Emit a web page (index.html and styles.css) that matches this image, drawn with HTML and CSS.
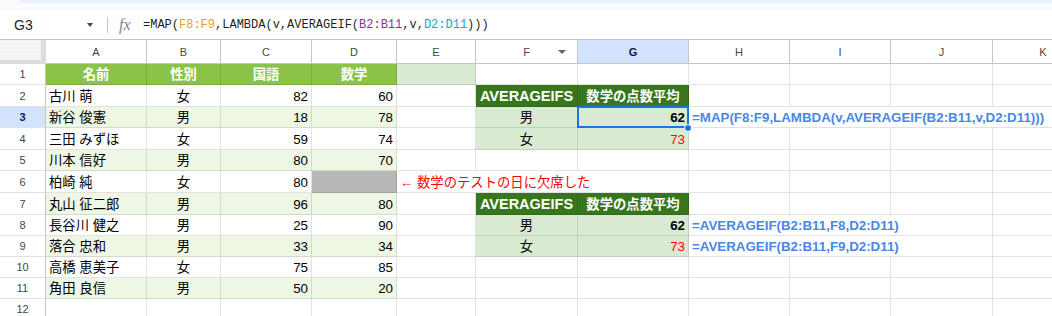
FILE: index.html
```html
<!DOCTYPE html>
<html lang="ja">
  <head>
    <meta charset="UTF-8" />
    <meta name="viewport" content="width=device-width, initial-scale=1.0" />
    <title>AVERAGEIF - Sheet</title>
    <link rel="stylesheet" href="styles.css">
  </head>
  <body>
    <div class="topstrip"><div class="toolbarEdge"></div></div>

    <div class="formulaBar">
      <div class="nameBox">
        <span>G3</span>
        <span class="caret"></span>
      </div>
      <div class="divider"></div>
      <span class="fx">fx</span>
      <div class="formula">=MAP(<span class="r1">F8:F9</span>,LAMBDA(v,AVERAGEIF(<span class="r2">B2:B11</span>,v,<span class="r3">D2:D11</span>)))</div>
    </div>

    <div class="sheet">
      <!-- column headers -->
      <div class="corner"></div>
      <div class="ch">A</div>
      <div class="ch">B</div>
      <div class="ch">C</div>
      <div class="ch">D</div>
      <div class="ch">E</div>
      <div class="ch">F<span class="filter"></span></div>
      <div class="ch on">G</div>
      <div class="ch">H</div>
      <div class="ch">I</div>
      <div class="ch">J</div>
      <div class="ch">K</div>

      <!-- row 1 -->
      <div class="rh">1</div>
      <div class="c head">名前</div>
      <div class="c head">性別</div>
      <div class="c head">国語</div>
      <div class="c head">数学</div>
      <div class="c pale"></div>
      <div class="c"></div><div class="c"></div><div class="c"></div>
      <div class="c"></div><div class="c"></div><div class="c"></div>

      <!-- row 2 -->
      <div class="rh">2</div>
      <div class="c">古川 萌</div>
      <div class="c mid">女</div>
      <div class="c num">82</div>
      <div class="c num">60</div>
      <div class="c"></div>
      <div class="c dark latin">AVERAGEIFS</div>
      <div class="c dark">数学の点数平均</div>
      <div class="c"></div><div class="c"></div><div class="c"></div><div class="c"></div>

      <!-- row 3 -->
      <div class="rh on">3</div>
      <div class="c band">新谷 俊憲</div>
      <div class="c band mid">男</div>
      <div class="c band num">18</div>
      <div class="c band num">78</div>
      <div class="c"></div>
      <div class="c pale mid">男</div>
      <div class="c pale num bold active">62<span class="handle"></span></div>
      <div class="c blue span4">=MAP(F8:F9,LAMBDA(v,AVERAGEIF(B2:B11,v,D2:D11)))</div>

      <!-- row 4 -->
      <div class="rh">4</div>
      <div class="c">三田 みずほ</div>
      <div class="c mid">女</div>
      <div class="c num">59</div>
      <div class="c num">74</div>
      <div class="c"></div>
      <div class="c pale mid">女</div>
      <div class="c pale num red">73</div>
      <div class="c"></div><div class="c"></div><div class="c"></div><div class="c"></div>

      <!-- row 5 -->
      <div class="rh">5</div>
      <div class="c band">川本 信好</div>
      <div class="c band mid">男</div>
      <div class="c band num">80</div>
      <div class="c band num">70</div>
      <div class="c"></div><div class="c"></div><div class="c"></div>
      <div class="c"></div><div class="c"></div><div class="c"></div><div class="c"></div>

      <!-- row 6 -->
      <div class="rh">6</div>
      <div class="c">柏崎 純</div>
      <div class="c mid">女</div>
      <div class="c num">80</div>
      <div class="c blank"></div>
      <div class="c red span3">← 数学のテストの日に欠席した</div>
      <div class="c"></div><div class="c"></div><div class="c"></div><div class="c"></div>

      <!-- row 7 -->
      <div class="rh">7</div>
      <div class="c band">丸山 征二郎</div>
      <div class="c band mid">男</div>
      <div class="c band num">96</div>
      <div class="c band num">80</div>
      <div class="c"></div>
      <div class="c dark latin">AVERAGEIFS</div>
      <div class="c dark">数学の点数平均</div>
      <div class="c"></div><div class="c"></div><div class="c"></div><div class="c"></div>

      <!-- row 8 -->
      <div class="rh">8</div>
      <div class="c">長谷川 健之</div>
      <div class="c mid">男</div>
      <div class="c num">25</div>
      <div class="c num">90</div>
      <div class="c"></div>
      <div class="c pale mid">男</div>
      <div class="c pale num bold">62</div>
      <div class="c blue span3">=AVERAGEIF(B2:B11,F8,D2:D11)</div>
      <div class="c"></div>

      <!-- row 9 -->
      <div class="rh">9</div>
      <div class="c band">落合 忠和</div>
      <div class="c band mid">男</div>
      <div class="c band num">33</div>
      <div class="c band num">34</div>
      <div class="c"></div>
      <div class="c pale mid">女</div>
      <div class="c pale num red">73</div>
      <div class="c blue span3">=AVERAGEIF(B2:B11,F9,D2:D11)</div>
      <div class="c"></div>

      <!-- row 10 -->
      <div class="rh">10</div>
      <div class="c">高橋 恵美子</div>
      <div class="c mid">女</div>
      <div class="c num">75</div>
      <div class="c num">85</div>
      <div class="c"></div><div class="c"></div><div class="c"></div>
      <div class="c"></div><div class="c"></div><div class="c"></div><div class="c"></div>

      <!-- row 11 -->
      <div class="rh">11</div>
      <div class="c band">角田 良信</div>
      <div class="c band mid">男</div>
      <div class="c band num">50</div>
      <div class="c band num">20</div>
      <div class="c"></div><div class="c"></div><div class="c"></div>
      <div class="c"></div><div class="c"></div><div class="c"></div><div class="c"></div>

      <!-- row 12 -->
      <div class="rh">12</div>
      <div class="c"></div><div class="c"></div><div class="c"></div><div class="c"></div>
      <div class="c"></div><div class="c"></div><div class="c"></div><div class="c"></div>
      <div class="c"></div><div class="c"></div><div class="c"></div>
    </div>
  </body>
</html>
```

FILE: styles.css
```css
body {
  margin: 0;
  width: 1052px;
  height: 316px;
  overflow: hidden;
  background: #fff;
  font-family: "Liberation Sans", "Noto Sans CJK JP", sans-serif;
  color: #000;
}

.topstrip {
  height: 10px;
  background: #f9fbfd;
}
.toolbarEdge {
  height: 3px;
  margin-left: 18px;
  background: #edf2fa;
  border-bottom-left-radius: 3px;
}

.formulaBar {
  height: 29px;
  display: flex;
  align-items: center;
}
.nameBox {
  width: 107px;
  box-sizing: border-box;
  padding: 0 14px 0 14px;
  display: flex;
  align-items: center;
  justify-content: space-between;
  font-size: 14px;
  color: #1f1f1f;
}
.caret {
  width: 0;
  height: 0;
  border-left: 3.5px solid transparent;
  border-right: 3.5px solid transparent;
  border-top: 4px solid #444746;
}
.divider {
  width: 1px;
  height: 16px;
  background: #c4c7c5;
}
.fx {
  width: 15px;
  margin-left: 11px;
  font-family: "Liberation Serif", serif;
  font-style: italic;
  font-size: 16px;
  color: #80868b;
}
.formula {
  margin-left: 9px;
  font-family: "Liberation Mono", monospace;
  font-size: 12px;
  color: #1f1f1f;
}
.r1 { color: #f7981d; }
.r2 { color: #7e3794; }
.r3 { color: #11a9cc; }

.sheet {
  display: grid;
  grid-template-columns: 46px 101px 74px 91px 85px 79px 102px 111px 101px 101px 102px 101px;
  grid-template-rows: 24px 21px 22px 21px 22px 21px 22px 22px 21px 21px 21px 21px 21px;
  width: max-content;
  border-top: 1px solid #c4c7c5;
}

.corner {
  background-color: #f1f3f4;
  background-image: radial-gradient(#fff 0.6px, transparent 0.8px);
  background-size: 4px 4px;
  border-right: 5px solid #dadce0;
  border-bottom: 4px solid #dadce0;
}
.ch {
  position: relative;
  display: flex;
  align-items: center;
  justify-content: center;
  font-size: 11px;
  color: #444746;
  border-right: 1px solid #c4c7c5;
  border-bottom: 1px solid #c4c7c5;
}
.ch.on {
  background: #d3e3fd;
  color: #041e49;
  font-weight: bold;
}
.filter {
  position: absolute;
  right: 11px;
  top: 10px;
  border-left: 4px solid transparent;
  border-right: 4px solid transparent;
  border-top: 4px solid #5f6368;
}
.rh {
  display: flex;
  align-items: center;
  justify-content: center;
  font-size: 11px;
  color: #444746;
  border-right: 1px solid #c4c7c5;
  border-bottom: 1px solid #e1e1e1;
}
.rh.on {
  background: #d3e3fd;
  color: #041e49;
  font-weight: bold;
}

.c {
  display: flex;
  align-items: flex-end;
  padding: 0 3px 1px 3px;
  font-size: 13.33px;
  line-height: 17px;
  white-space: nowrap;
  border-right: 1px solid rgba(0, 0, 0, 0.115);
  border-bottom: 1px solid rgba(0, 0, 0, 0.115);
}
.mid { justify-content: center; }
.num { justify-content: flex-end; }
.bold { font-weight: bold; }

.head {
  justify-content: center;
  background: #8bc34a;
  color: #fff;
  font-weight: bold;
}
.band { background: #eef6e4; }
.pale { background: #d9ead3; }
.blank { background: #b7b7b7; }
.dark {
  justify-content: center;
  background: #38761d;
  color: #fff;
  font-weight: bold;
}
.dark.latin { font-size: 14.5px; }

.red { color: #ff0000; }
.blue {
  color: #4a86e8;
  font-weight: bold;
}
.span3 { grid-column: span 3; }
.span4 { grid-column: span 4; }

.active { position: relative; }
.active::after {
  content: "";
  position: absolute;
  left: -1px;
  top: -1px;
  right: -1px;
  bottom: -1px;
  border: 2px solid #1a73e8;
}
.handle {
  position: absolute;
  right: -4px;
  bottom: -5px;
  width: 6px;
  height: 6px;
  border: 1px solid #fff;
  border-radius: 50%;
  background: #1a73e8;
  z-index: 1;
}
```
